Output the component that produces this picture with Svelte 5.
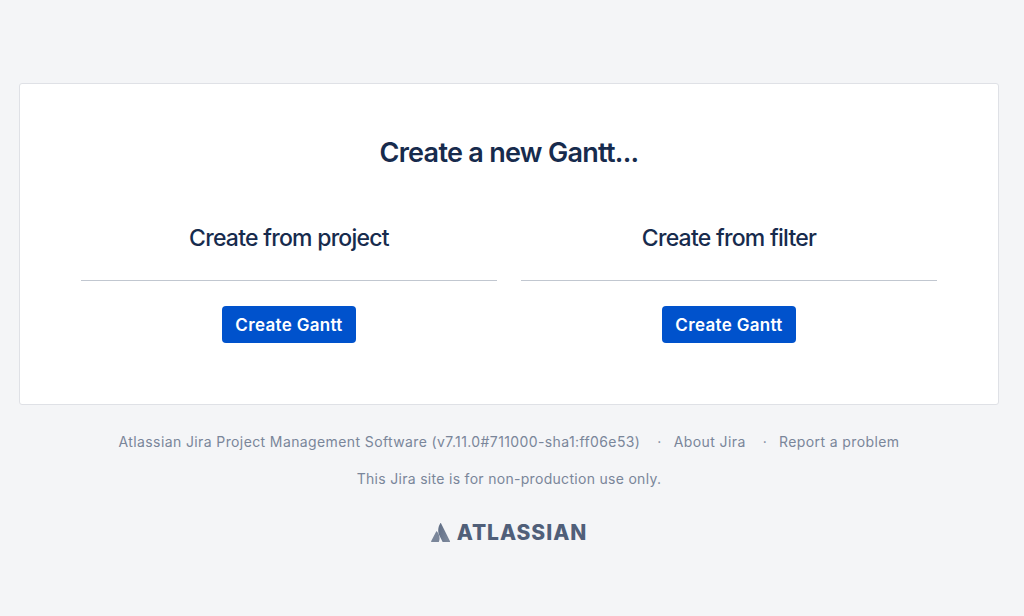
<script lang="ts">
  const columns = ['Create from project', 'Create from filter'];
</script>

<div class="page">
  <main class="card">
    <h1>Create a new Gantt...</h1>
    <div class="columns">
      {#each columns as title}
        <section class="column">
          <h2>{title}</h2>
          <div class="action">
            <button type="button">Create Gantt</button>
          </div>
        </section>
      {/each}
    </div>
  </main>

  <footer>
    <ul class="links">
      <li>Atlassian Jira Project Management Software (v7.11.0#711000-sha1:ff06e53)</li>
      <li>About Jira</li>
      <li>Report a problem</li>
    </ul>
    <p>This Jira site is for non-production use only.</p>
    <div class="logo">
      <svg width="20" height="20" viewBox="0 0 20 20" aria-hidden="true">
        <defs>
          <linearGradient id="mark" x1="0" y1="0" x2="1" y2="0.5">
            <stop offset="0" stop-color="#5e6c84" />
            <stop offset="1" stop-color="#7a869a" />
          </linearGradient>
        </defs>
        <path d="M6 9.400c-.2-.3-.6-.3-.8.100L.1 19.300c-.2.300.1.700.4.700h7c.2 0 .3-.1.400-.3 1.400-3 .6-7.600-1.900-10.300z" fill="#7a869a" />
        <path d="M9.300 1.200C6.600 5.500 6.800 10.300 8.500 13.700l3 6c.1.200.2.300.4.300h6.700c.3 0 .6-.4.400-.7L10 1.200c-.2-.4-.5-.4-.7 0z" fill="url(#mark)" />
      </svg>
      <span>ATLASSIAN</span>
    </div>
  </footer>
</div>

<style>
  :global(body) {
    margin: 0;
    background: #f4f5f7;
  }

  .page {
    box-sizing: border-box;
    height: 616px;
    padding: 83px 25px 0 19px;
    font-family: Inter, "Liberation Sans", sans-serif;
    overflow: hidden;
  }

  .card {
    box-sizing: border-box;
    height: 322px;
    padding: 52px 61px 0;
    background: #fff;
    border: 1px solid #dfe1e6;
    border-radius: 3px;
  }

  h1 {
    margin: 0;
    font-size: 27px;
    line-height: 34px;
    font-weight: 600;
    letter-spacing: -0.71px;
    color: #172b4d;
    text-align: center;
  }

  .columns {
    display: flex;
    gap: 24px;
    margin-top: 54px;
  }

  .column {
    flex: 1;
  }

  h2 {
    margin: 0;
    padding-bottom: 28px;
    font-size: 23px;
    line-height: 28px;
    font-weight: 500;
    letter-spacing: -0.74px;
    color: #172b4d;
    text-align: center;
    border-bottom: 1px solid #c1c7d0;
  }

  .action {
    display: flex;
    justify-content: center;
    margin-top: 25px;
  }

  button {
    height: 37px;
    padding: 0 13.5px;
    border: 0;
    border-radius: 4px;
    background: #0052cc;
    color: #fff;
    font: 600 17px Inter, "Liberation Sans", sans-serif;
    letter-spacing: 0.32px;
  }

  footer {
    margin-top: 27px;
    font-size: 14px;
    line-height: 20px;
    letter-spacing: 0.39px;
    color: #7a869a;
    text-align: center;
  }

  .links {
    display: flex;
    justify-content: center;
    margin: 0;
    padding: 0;
    list-style: none;
  }

  .links li + li::before {
    content: '·';
    margin: 0 12px 0 17px;
  }

  p {
    margin: 17px 0 0;
    letter-spacing: 0.3px;
  }

  .logo {
    display: flex;
    justify-content: center;
    align-items: center;
    gap: 6px;
    margin-top: 31px;
    color: #505f79;
    letter-spacing: 0;
  }

  .logo svg {
    margin-bottom: 3px;
  }

  .logo span {
    font-size: 21px;
    line-height: 26px;
    font-weight: 800;
    letter-spacing: 0.95px;
  }
</style>
